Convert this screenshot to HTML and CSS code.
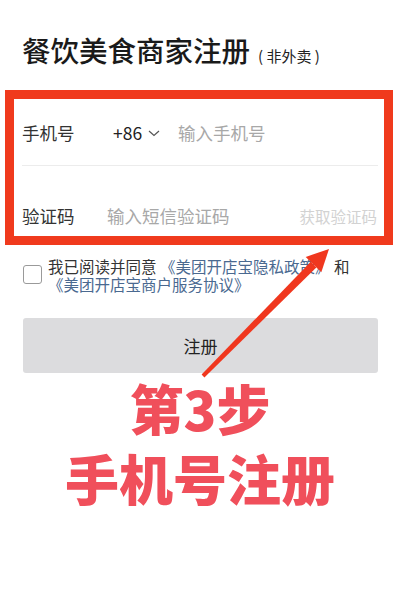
FILE: index.html
```html
<!DOCTYPE html>
<html lang="zh-CN">
<head>
<meta charset="utf-8">
<title>餐饮美食商家注册</title>
<link rel="stylesheet" href="styles.css">
</head>
<body>
<div class="page">
  <h1 class="title">餐饮美食商家注册<span class="sub">( 非外卖 )</span></h1>

  <div class="box">
    <div class="row row-phone">
      <span class="label label-phone">手机号</span>
      <span class="code">+86
        <svg class="chev" width="12" height="7" viewBox="0 0 12 7"><polyline points="1,1 6,5.5 11,1" fill="none" stroke="#555" stroke-width="1.2"/></svg>
      </span>
      <span class="ph">输入手机号</span>
    </div>
    <div class="divider"></div>
    <div class="row row-code">
      <span class="label label-code">验证码</span>
      <span class="ph">输入短信验证码</span>
      <span class="get">获取验证码</span>
    </div>
  </div>

  <div class="agree">
    <span class="check"></span>
    <div class="agree-text">
      <div class="agree-line">我已阅读并同意 <span class="link">《美团开店宝隐私政策》</span> 和</div>
      <div class="agree-line"><span class="link">《美团开店宝商户服务协议》</span></div>
    </div>
  </div>

  <div class="btn">注册</div>

  <div class="big">
    <div class="big-line">第3步</div>
    <div class="big-line">手机号注册</div>
  </div>

  <svg class="arrow" width="400" height="612" viewBox="0 0 400 612">
    <polygon points="204.4,377.4 201.6,374.6 310.7,261.8 316.3,267.4" fill="#f0371e"/>
    <polygon points="329,249 321.3,272.3 305.7,256.9" fill="#f0371e"/>
  </svg>
</div>
</body>
</html>
```

FILE: styles.css
```css
* { box-sizing: border-box; }
html, body { margin: 0; padding: 0; background: #fff; }
body {
  font-family: "Noto Sans CJK SC", "Noto Sans", sans-serif;
  color: #1a1a1a;
}
.page {
  position: relative;
  width: 400px;
  height: 612px;
  overflow: hidden;
}
.title {
  margin: 0;
  padding: 32px 0 0 22px;
  height: 68px;
  font-size: 28.5px;
  line-height: 36px;
  font-weight: 500;
  color: #1a1a1a;
}
.sub {
  font-size: 15px;
  font-weight: 400;
  margin-left: 8px;
  color: #222;
}
.box {
  margin: 22px 7px 0 5px;
  height: 155px;
  border: 9px solid #f03a1d;
}
.row {
  display: flex;
  align-items: center;
  padding: 0 7px 0 8px;
  font-size: 17.5px;
  line-height: 24px;
}
.row-phone { height: 66px; padding-top: 2px; }
.row-code { padding-top: 38px; }
.label { color: #333; }
.label-phone { width: 91px; }
.label-code { width: 85px; }
.code {
  display: flex;
  align-items: center;
  color: #222;
  width: 65px;
}
.chev { margin-left: 6px; margin-top: 1px; }
.ph { color: #a8a8a8; }
.get {
  margin-left: auto;
  color: #d2d2d2;
  font-size: 15.5px;
}
.divider {
  height: 1px;
  background: #ececec;
  margin: 0 6px 0 8px;
}
.agree {
  display: flex;
  align-items: flex-start;
  margin-top: 12px;
  padding-left: 23px;
}
.check {
  flex: none;
  width: 19px;
  height: 19px;
  margin-top: 8px;
  border: 1px solid #9a9a9a;
  border-radius: 3px;
}
.agree-text {
  margin-left: 6px;
  font-size: 15.5px;
  color: #333;
}
.agree-line {
  height: 18px;
  line-height: 18px;
  white-space: nowrap;
}
.link { color: #4a6990; }
.btn {
  margin: 25px 22px 0 23px;
  height: 55px;
  background: #dcdcde;
  border-radius: 3px;
  display: flex;
  align-items: center;
  justify-content: center;
  font-size: 17px;
  color: #222;
}
.big {
  text-align: center;
  color: #f04f5b;
  font-size: 54px;
  font-weight: 900;
  padding-top: 8px;
}
.big-line {
  height: 54px;
  line-height: 54px;
}
.big-line + .big-line { margin-top: 16px; }
.arrow {
  position: absolute;
  left: 0;
  top: 0;
  pointer-events: none;
}
```
